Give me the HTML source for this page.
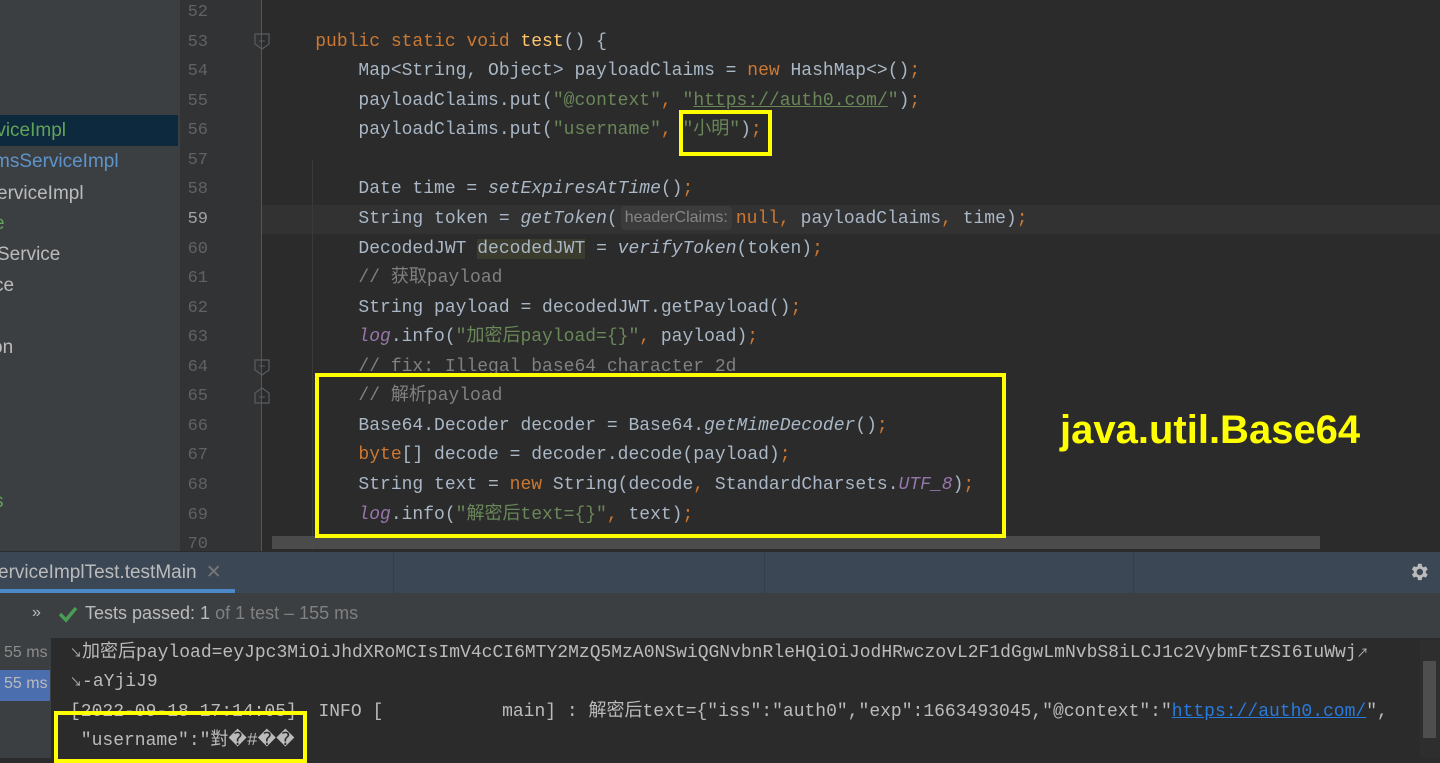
<!DOCTYPE html>
<html><head><meta charset="utf-8"><style>
*{margin:0;padding:0;box-sizing:border-box}
body{width:1440px;height:758px;overflow:hidden;background:#2b2b2b;position:relative;font-family:"Liberation Mono","Noto Sans CJK SC",monospace}
.abs{position:absolute}
#side{left:0;top:0;width:180px;height:551px;background:#3c3f41}
.si{position:absolute;left:0;font:19px "Liberation Sans",sans-serif;color:#bbbbbb;white-space:nowrap;height:31px;line-height:31px}
#gut{left:180px;top:0;width:82px;height:551px;background:#313335;border-right:1px solid #555}
.ln{position:absolute;font-size:17px;color:#606366;line-height:29.56px;height:29.56px;text-align:right;margin-top:2px}
.cl{position:absolute;left:272px;font-size:18px;color:#a9b7c6;line-height:29.56px;height:29.56px;white-space:pre;margin-top:2px}
.k{color:#cc7832}.s{color:#6a8759}.c{color:#808080}.i{font-style:italic}.p{color:#9876aa;font-style:italic}.f{color:#ffc66d}
.yb{position:absolute;border:4px solid #ffff00}
.con{position:absolute;left:70px;font-size:18px;color:#bbbbbb;line-height:29.5px;white-space:pre;margin-top:1px}
</style></head><body>
<div id="side" class="abs">
<div class="abs" style="left:0;top:115px;width:178px;height:31px;background:#0d293e"></div>
<div class="si" style="top:115px;left:-10px;color:#62a35a">rviceImpl</div>
<div class="si" style="top:146px;left:-6px;color:#5d94cb">msServiceImpl</div>
<div class="si" style="top:178px;left:-3px">erviceImpl</div>
<div class="si" style="top:208px;left:-6px;color:#62a35a">e</div>
<div class="si" style="top:239px;left:-3px">Service</div>
<div class="si" style="top:270px;left:-6px">ce</div>
<div class="si" style="top:332px;left:-8px">on</div>
<div class="si" style="top:486px;left:-6px;color:#62a35a">s</div>
</div>
<div id="gut" class="abs"></div>
<div class="abs" style="left:262px;top:205px;width:1178px;height:29px;background:#323232"></div>
<div class="abs" style="left:312px;top:160px;width:1px;height:390px;background:#3a3a3a"></div>
<!-- line numbers -->
<div class="ln" style="top:-4px;left:180px;width:28px">52</div>
<div class="ln" style="top:25.6px;left:180px;width:28px">53</div>
<div class="ln" style="top:55.1px;left:180px;width:28px">54</div>
<div class="ln" style="top:84.7px;left:180px;width:28px">55</div>
<div class="ln" style="top:114.2px;left:180px;width:28px">56</div>
<div class="ln" style="top:143.8px;left:180px;width:28px">57</div>
<div class="ln" style="top:173.4px;left:180px;width:28px">58</div>
<div class="ln" style="top:202.9px;left:180px;width:28px;color:#a4a3a3">59</div>
<div class="ln" style="top:232.5px;left:180px;width:28px">60</div>
<div class="ln" style="top:262px;left:180px;width:28px">61</div>
<div class="ln" style="top:291.6px;left:180px;width:28px">62</div>
<div class="ln" style="top:321.2px;left:180px;width:28px">63</div>
<div class="ln" style="top:350.7px;left:180px;width:28px">64</div>
<div class="ln" style="top:380.3px;left:180px;width:28px">65</div>
<div class="ln" style="top:409.8px;left:180px;width:28px">66</div>
<div class="ln" style="top:439.4px;left:180px;width:28px">67</div>
<div class="ln" style="top:469px;left:180px;width:28px">68</div>
<div class="ln" style="top:498.5px;left:180px;width:28px">69</div>
<div class="ln" style="top:528.1px;left:180px;width:28px">70</div>
<svg class="abs" style="left:254px;top:33px" width="16" height="18"><path d="M1 1H15V11L8 16L1 11Z" fill="none" stroke="#5a5d5f" stroke-width="1.2"/><path d="M5 8H11" stroke="#5a5d5f"/></svg>
<svg class="abs" style="left:254px;top:359px" width="16" height="18"><path d="M1 1H15V11L8 16L1 11Z" fill="none" stroke="#5a5d5f" stroke-width="1.2"/><path d="M5 7H11" stroke="#5a5d5f"/></svg>
<svg class="abs" style="left:254px;top:386px" width="16" height="18"><path d="M1 17H15V7L8 2L1 7Z" fill="none" stroke="#5a5d5f" stroke-width="1.2"/><path d="M5 11H11" stroke="#5a5d5f"/></svg>
<!-- code -->
<div class="cl" style="top:25.6px">    <span class="k">public static void </span><span class="f">test</span>() {</div>
<div class="cl" style="top:55.1px">        Map&lt;String, Object&gt; payloadClaims = <span class="k">new </span>HashMap&lt;&gt;()<span class="k">;</span></div>
<div class="cl" style="top:84.7px">        payloadClaims.put(<span class="s">"@context"</span><span class="k">, </span><span class="s">"<u>https://auth0.com/</u>"</span>)<span class="k">;</span></div>
<div class="cl" style="top:114.2px">        payloadClaims.put(<span class="s">"username"</span><span class="k">, </span><span class="s">"小明"</span>)<span class="k">;</span></div>
<div class="cl" style="top:173.4px">        Date time = <span class="i">setExpiresAtTime</span>()<span class="k">;</span></div>
<div class="cl" style="top:202.9px">        String token = <span class="i">getToken</span>(<span style="display:inline-block;font:16px 'Liberation Sans',sans-serif;color:#868686;background:#3b3b3b;padding:0 4px;border-radius:4px;line-height:24px;margin:0 4px 0 3px;vertical-align:1px">headerClaims:</span><span class="k">null, </span>payloadClaims<span class="k">, </span>time)<span class="k">;</span></div>
<div class="cl" style="top:232.5px">        DecodedJWT <span style="background:#3b3b2e">decodedJWT</span> = <span class="i">verifyToken</span>(token)<span class="k">;</span></div>
<div class="cl c" style="top:262px">        // 获取payload</div>
<div class="cl" style="top:291.6px">        String payload = decodedJWT.getPayload()<span class="k">;</span></div>
<div class="cl" style="top:321.2px">        <span class="p">log</span>.info(<span class="s">"加密后payload={}"</span><span class="k">, </span>payload)<span class="k">;</span></div>
<div class="cl c" style="top:350.7px">        // fix: Illegal base64 character 2d</div>
<div class="cl c" style="top:380.3px">        // 解析payload</div>
<div class="cl" style="top:409.8px">        Base64.Decoder decoder = Base64.<span class="i">getMimeDecoder</span>()<span class="k">;</span></div>
<div class="cl" style="top:439.4px">        <span class="k">byte</span>[] decode = decoder.decode(payload)<span class="k">;</span></div>
<div class="cl" style="top:469px">        String text = <span class="k">new </span>String(decode<span class="k">, </span>StandardCharsets.<span class="p">UTF_8</span>)<span class="k">;</span></div>
<div class="cl" style="top:498.5px">        <span class="p">log</span>.info(<span class="s">"解密后text={}"</span><span class="k">, </span>text)<span class="k">;</span></div>
<div class="abs" style="left:272px;top:536px;width:1048px;height:13px;background:#4b4b4b"></div>
<div class="abs" style="left:1060px;top:408px;font:bold 40px 'Liberation Sans',sans-serif;color:#ffff00;white-space:nowrap">java.util.Base64</div>
<!-- bottom tabs -->
<div class="abs" style="left:0;top:551px;width:1440px;height:42px;background:#3b4754;border-top:1px solid #2b2b2b"></div>
<div class="abs" style="left:393px;top:552px;width:1px;height:41px;background:#33404c"></div>
<div class="abs" style="left:764px;top:552px;width:1px;height:41px;background:#33404c"></div>
<div class="abs" style="left:1133px;top:552px;width:1px;height:41px;background:#33404c"></div>
<div class="abs" style="left:-2px;top:561px;font:19px 'Liberation Sans',sans-serif;color:#bbbbbb;white-space:nowrap">erviceImplTest.testMain <span style="color:#777;margin-left:4px">✕</span></div>
<div class="abs" style="left:0;top:589px;width:235px;height:4px;background:#4a88c7"></div>
<svg class="abs" style="left:1408px;top:561px" width="22" height="22" viewBox="0 0 24 24"><path fill="#bbbbbb" d="M19.4 13a7.5 7.5 0 0 0 0-2l2.1-1.6-2-3.5-2.5 1a7 7 0 0 0-1.7-1L14.9 3h-4l-.4 2.7a7 7 0 0 0-1.7 1l-2.5-1-2 3.5L6.4 11a7.5 7.5 0 0 0 0 2l-2.1 1.6 2 3.5 2.5-1a7 7 0 0 0 1.7 1l.4 2.7h4l.4-2.7a7 7 0 0 0 1.7-1l2.5 1 2-3.5zM12.9 15.5a3.5 3.5 0 1 1 0-7 3.5 3.5 0 0 1 0 7z"/></svg>
<!-- test status -->
<div class="abs" style="left:0;top:593px;width:1440px;height:45px;background:#3c3f41"></div>
<div class="abs" style="left:32px;top:604px;font:16px 'Liberation Sans',sans-serif;color:#bbbbbb">»</div>
<svg class="abs" style="left:58px;top:605px" width="20" height="18"><path d="M2 9L8 15L18 3" fill="none" stroke="#499c54" stroke-width="3.5"/></svg>
<div class="abs" style="left:85px;top:603px;font:18px 'Liberation Sans',sans-serif;color:#bbbbbb;white-space:nowrap">Tests passed: 1 <span style="color:#808080">of 1 test – 155 ms</span></div>
<!-- console -->
<div class="abs" style="left:0;top:638px;width:51px;height:120px;background:#3c3f41"></div>
<div class="abs" style="left:0;top:670px;width:50px;height:31px;background:#4b6eaf"></div>
<div class="abs" style="left:4px;top:644px;font:16px 'Liberation Sans',sans-serif;color:#8c8c8c">55 ms</div>
<div class="abs" style="left:4px;top:675px;font:16px 'Liberation Sans',sans-serif;color:#bbbbbb">55 ms</div>
<div class="abs" style="left:1420px;top:640px;width:20px;height:118px;background:#2e2e2e"></div>
<div class="abs" style="left:1423px;top:661px;width:13px;height:77px;background:#4e4e4e"></div>
<div class="con" style="top:638px"><span style="font-size:12px">↘</span>加密后payload=eyJpc3MiOiJhdXRoMCIsImV4cCI6MTY2MzQ5MzA0NSwiQGNvbnRleHQiOiJodHRwczovL2F1dGgwLmNvbS8iLCJ1c2VybmFtZSI6IuWwj<span style="font-size:12px">↗</span></div>
<div class="con" style="top:667px"><span style="font-size:12px">↘</span>-aYjiJ9</div>
<div class="con" style="top:697px">[2022-09-18 17:14:05]  INFO [           main] : 解密后text={"iss":"auth0","exp":1663493045,"@context":"<u style="color:#287bde">https://auth0.com/</u>",</div>
<div class="con" style="top:726px"> "username":"對�#��</div>
<!-- yellow boxes -->
<div class="yb" style="left:679px;top:110px;width:93px;height:46px"></div>
<div class="yb" style="left:315px;top:373px;width:691px;height:165px"></div>
<div class="yb" style="left:54px;top:711px;width:253px;height:52px"></div>
</body></html>
